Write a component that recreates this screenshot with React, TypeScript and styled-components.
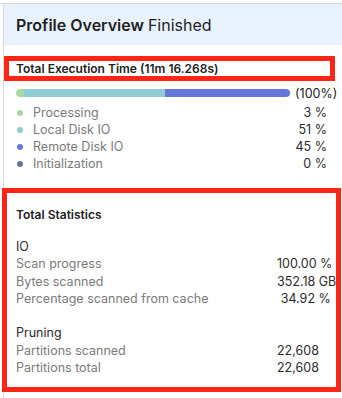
import styled, {createGlobalStyle} from 'styled-components';

const GlobalStyle = createGlobalStyle`
  html, body {
    margin: 0;
    padding: 0;
    background: #ffffff;
  }
  body {
    font-family: Inter, "Liberation Sans", sans-serif;
    color: #2b2b2b;
    -webkit-font-smoothing: antialiased;
  }
`

interface Segment {
    label: string;
    color: string;
    share: number;
    value: string;
}

interface Stat {
    label: string;
    value: string;
    unit?: string;
}

const segments: Segment[] = [
    {label: 'Processing', color: '#a9d8a1', share: 3, value: '3 %'},
    {label: 'Local Disk IO', color: '#8ecbd4', share: 51, value: '51 %'},
    {label: 'Remote Disk IO', color: '#6675da', share: 45, value: '45 %'},
    {label: 'Initialization', color: '#6c7290', share: 0, value: '0 %'},
]

const ioStats: Stat[] = [
    {label: 'Scan progress', value: '100.00', unit: '%'},
    {label: 'Bytes scanned', value: '352.18', unit: 'GB'},
    {label: 'Percentage scanned from cache', value: '34.92', unit: '%'},
]

const pruningStats: Stat[] = [
    {label: 'Partitions scanned', value: '22,608'},
    {label: 'Partitions total', value: '22,608'},
]

const Panel = styled.div`
  margin: 3px 0 0 0;
  padding-left: 3px;
  border-top: 1px solid #d9d9d9;
  height: 395px;
  box-sizing: border-box;
`

const PanelBody = styled.div`
  border-left: 1px solid #d9d9d9;
  height: 100%;
`

const Header = styled.div`
  display: flex;
  align-items: center;
  height: 41px;
  padding-left: 12px;
  background: #e8f2fc;
  font-size: 16px;
  color: #1f1f1f;

  b {
    font-weight: 600;
    margin-right: 4px;
  }
`

const Highlight = styled.div<{ $inset: string }>`
  border: 5px solid #fe2516;
  margin: ${p => p.$inset};
`

const SectionTitle = styled.div`
  font-size: 12px;
  font-weight: 600;
  line-height: 15px;
  padding-left: 7px;
  color: #222;
`

const BarRow = styled.div`
  display: flex;
  align-items: center;
  gap: 5px;
  height: 16px;
  margin-top: 4px;
  padding-left: 12px;
  font-size: 12.5px;
  color: #222;
`

const Bar = styled.div`
  display: flex;
  width: 274px;
  height: 8px;
  border-radius: 4px;
  overflow: hidden;
`

const BarPart = styled.div<{ color: string }>`
  background: ${p => p.color};
  height: 100%;
`

const Legend = styled.div`
  margin-top: 3px;
  padding: 0 15px 0 12px;
`

const LegendRow = styled.div`
  display: flex;
  align-items: center;
  height: 17px;
  font-size: 12.5px;
`

const Dot = styled.span<{ color: string }>`
  width: 6px;
  height: 6px;
  border-radius: 50%;
  background: ${p => p.color};
  margin: 0 10px 0 1px;
`

const LegendLabel = styled.span`
  flex: 1;
  color: #7a7a7a;
`

const LegendValue = styled.span`
  color: #2b2b2b;
`

const StatsCard = styled.div`
  padding: 13px 0 10px 9px;
`

const StatsTitle = styled.div`
  font-size: 12px;
  font-weight: 600;
  line-height: 17.6px;
  color: #222;
  margin-bottom: 14px;
`

const StatGroup = styled.div`
  & + & {
    margin-top: 16px;
  }
`

const GroupName = styled.div`
  font-size: 12.5px;
  line-height: 17.6px;
  color: #2b2b2b;
`

const StatRow = styled.div`
  display: grid;
  grid-template-columns: 1fr 59px;
  font-size: 12.5px;
  line-height: 17.6px;
`

const StatLabel = styled.span`
  color: #7a7a7a;
`

const StatValue = styled.span`
  color: #2b2b2b;
  white-space: nowrap;

  .num {
    display: inline-block;
    min-width: 38px;
    text-align: right;
  }
`

const StatList = ({name, stats}: { name: string, stats: Stat[] }) => (
    <StatGroup>
        <GroupName>{name}</GroupName>
        {stats.map(s => (
            <StatRow key={s.label}>
                <StatLabel>{s.label}</StatLabel>
                <StatValue>
                    <span className="num">{s.value}</span>
                    {s.unit ? ` ${s.unit}` : ''}
                </StatValue>
            </StatRow>
        ))}
    </StatGroup>
)

const App = () => {
    return (
        <>
            <GlobalStyle/>
            <Panel>
                <PanelBody>
                    <Header>
                        <b>Profile Overview</b> Finished
                    </Header>

                    <Highlight $inset="11px 7px 0 0">
                        <SectionTitle>Total Execution Time (11m 16.268s)</SectionTitle>
                    </Highlight>

                    <BarRow>
                        <Bar>
                            {segments.filter(s => s.share > 0).map(s => (
                                <BarPart key={s.label} color={s.color} style={{flex: s.share}}/>
                            ))}
                        </Bar>
                        (100%)
                    </BarRow>

                    <Legend>
                        {segments.map(s => (
                            <LegendRow key={s.label}>
                                <Dot color={s.color}/>
                                <LegendLabel>{s.label}</LegendLabel>
                                <LegendValue>{s.value}</LegendValue>
                            </LegendRow>
                        ))}
                    </Legend>

                    <Highlight $inset="16px 1px 0 -2px">
                        <StatsCard>
                            <StatsTitle>Total Statistics</StatsTitle>
                            <StatList name="IO" stats={ioStats}/>
                            <StatList name="Pruning" stats={pruningStats}/>
                        </StatsCard>
                    </Highlight>
                </PanelBody>
            </Panel>
        </>
    )
}

export default App
